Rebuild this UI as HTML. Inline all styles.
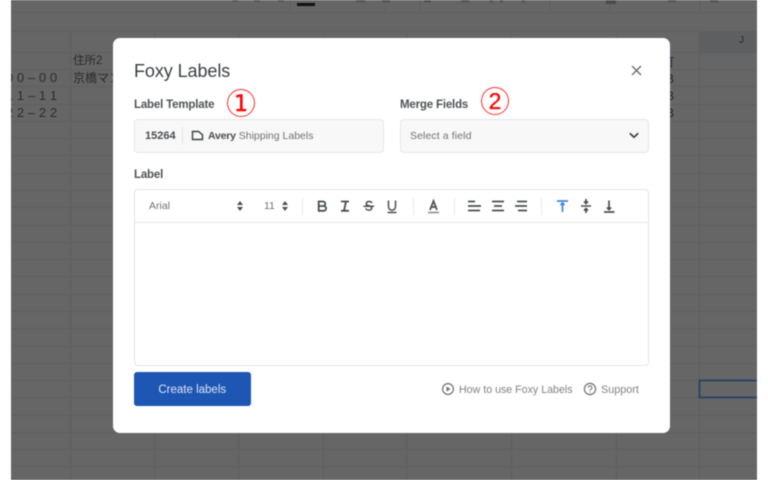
<!DOCTYPE html>
<html><head><meta charset="utf-8"><style>
html,body{margin:0;padding:0;background:#fff}
#p{position:relative;width:768px;height:480px;overflow:hidden;background:#fff;font-family:"Liberation Sans","Noto Sans CJK JP",sans-serif;filter:blur(.45px)}
#p div,#p svg{position:absolute}
.t{white-space:nowrap;line-height:16px;height:16px}
.lab{font-size:11.500px;font-weight:bold;color:#4f5255;letter-spacing:-.18px}
.box{background:#f8f8f8;border:1px solid #e6e6e6;border-radius:4px;box-sizing:border-box}
.cell{color:#2a2a2a}
.n{overflow:hidden;width:47px;left:11px;font-size:13px;color:#2c2c2c}
.n span{position:absolute;top:0;width:11px;text-align:center}
</style></head><body><div id="p">
<svg style="left:0;top:0" width="768" height="480" viewBox="0 0 768 480">
<rect x="11" width="746" height="480" fill="#666666"/>
<rect x="699.500" y="31" width="57.500" height="21" fill="#5e5f60"/>
<path fill="none" stroke="#5f5f5f" stroke-width="1" d="M11 12.500H757M11 31.500H757M11 52.500H757M11 69.500H757M11 86.500H757M11 104.500H757M11 121.500H757M11 138.500H757M11 155.500H757M11 173.500H757M11 190.500H757M11 207.500H757M11 225.500H757M11 242.500H757M11 259.500H757M11 276.500H757M11 294.500H757M11 311.500H757M11 328.500H757M11 346.500H757M11 363.500H757M11 380.500H757M11 397.500H757M11 415.500H757M11 432.500H757M11 449.500H757M11 466.500H757M70.500 31V480M154.500 31V480M238.500 31V480M323.500 31V480M406.500 31V480M511.500 31V480M616.500 31V480M699.500 31V480M290 0V12M385 0V12M420 0V12M550 0V12M610 0V12M700 0V12"/>
<path d="M757 380.500H699.500V397.500H757" fill="none" stroke="#1f3c66" stroke-width="1.500"/>
<rect x="297" y="3" width="18" height="3" fill="#111"/>
<path fill="#4a4a4a" d="M232 0h6v1.500h-6zM254 0h6v1.500h-6zM278 0h6v1.500h-6zM356 0h9v2h-9zM382 0h8v2h-8zM424 0h7v2h-7zM461 0h8v2h-8zM490 0h3v2h-3zM500 0h3v2h-3zM522 0h3v2h-3zM606 0h10v4h-10zM668 0h8v2h-8zM710 0h8v2h-8z"/>
</svg>
<div class="t cell" style="left:73px;top:53px;font-size:11.500px">住所2</div>
<div class="t cell" style="left:73px;top:70px;font-size:12px">京橋マンション</div>
<div class="t n" style="top:70px"><span style="left:-7px">0</span><span style="left:4px">0</span><span style="left:15px">–</span><span style="left:26px">0</span><span style="left:37px">0</span></div>
<div class="t n" style="top:88px"><span style="left:-7px">1</span><span style="left:4px">1</span><span style="left:15px">–</span><span style="left:26px">1</span><span style="left:37px">1</span></div>
<div class="t n" style="top:105px"><span style="left:-7px">2</span><span style="left:4px">2</span><span style="left:15px">–</span><span style="left:26px">2</span><span style="left:37px">2</span></div>
<div class="t" style="left:662px;top:54px;font-size:12px;color:#1a2433">町</div>
<div class="t" style="left:666px;top:71px;font-size:12px;color:#1a2433">B</div>
<div class="t" style="left:666px;top:88px;font-size:12px;color:#1a2433">B</div>
<div class="t" style="left:666px;top:105px;font-size:12px;color:#1a2433">B</div>
<div class="t" style="left:739px;top:33px;font-size:10px;color:#2a2a2a">J</div>

<div style="left:113px;top:38px;width:556.500px;height:395px;background:#fff;border-radius:7px"></div>
<div class="t" style="left:134px;top:61px;height:20px;line-height:20px;font-size:18px;color:#3c4043;letter-spacing:-.08px">Foxy Labels</div>
<svg style="left:630px;top:64px" width="13" height="13" viewBox="0 0 13 13"><path d="M2 2l9 9M11 2l-9 9" stroke="#6f6f6f" stroke-width="1.400" fill="none"/></svg>

<div class="t lab" style="left:134px;top:97px">Label Template</div>
<div class="t lab" style="left:400px;top:97px">Merge Fields</div>
<svg style="left:226px;top:88px" width="30" height="30" viewBox="0 0 30 30"><circle cx="15" cy="15" r="13.500" fill="#fff" stroke="#ff3030" stroke-width="1"/><text x="15" y="23" text-anchor="middle" font-family="DejaVu Sans,sans-serif" font-size="22" stroke="#ff0000" stroke-width=".5" fill="#ff0000">1</text></svg>
<svg style="left:480px;top:86px" width="30" height="30" viewBox="0 0 30 30"><circle cx="15" cy="15" r="13.500" fill="#fff" stroke="#ff3030" stroke-width="1"/><text x="15" y="23" text-anchor="middle" font-family="Liberation Sans,sans-serif" font-size="23" stroke="#ff0000" stroke-width=".3" fill="#ff0000">2</text></svg>

<div class="box" style="left:134px;top:119px;width:250px;height:34px"></div>
<div class="t" style="left:145px;top:127.500px;font-size:11px;font-weight:bold;color:#4a4d50">15264</div>
<div style="left:182px;top:127px;width:1px;height:17px;background:#e6e6e6"></div>
<svg style="left:191px;top:130px" width="13" height="11" viewBox="0 0 13 11"><path d="M1.500 1.500H7.500L11.500 4.800V9.500H1.500Z" fill="none" stroke="#3c4043" stroke-width="1.400"/></svg>
<div class="t" style="left:208px;top:128px;font-size:10.500px;color:#6f7174"><b style="color:#4a4d50;letter-spacing:-.2px">Avery</b> Shipping Labels</div>

<div class="box" style="left:400px;top:119px;width:249px;height:34px"></div>
<div class="t" style="left:410px;top:128px;font-size:10.500px;color:#6f7174;letter-spacing:.1px">Select a field</div>
<svg style="left:628px;top:131px" width="12" height="9" viewBox="0 0 12 9"><path d="M1.800 2.200L6 6.200L10.200 2.200" fill="none" stroke="#3c4043" stroke-width="1.700"/></svg>

<div class="t lab" style="left:134px;top:167px">Label</div>
<div style="left:134px;top:189px;width:515px;height:177px;box-sizing:border-box;border:1px solid #e3e3e3;border-radius:4px;background:#fff"></div>
<div style="left:135px;top:222px;width:513px;height:1px;background:#e6e6e6"></div>
<div class="t" style="left:149px;top:198px;font-size:10.500px;color:#6f7174">Arial</div>
<div class="t" style="left:264px;top:198px;font-size:10.500px;color:#6f7174">11</div>
<svg style="left:135px;top:190px" width="513" height="32" viewBox="135 190 513 32">
<path fill="#4a4d50" d="M240 201l3 4h-6zM240 211l3-4h-6zM285 201l3 4h-6zM285 211l3-4h-6z"/>
<path stroke="#e8e8e8" stroke-width="1" d="M302.500 198v17M413.500 198v17M454.500 198v17M541.500 198v17"/>
<g fill="none" stroke="#4a4d50" stroke-width="1.800">
<path d="M318.700 201.500h4.300a2.200 2.200 0 0 1 0 4.500h-4.300zM318.700 206h5a2.400 2.400 0 0 1 0 4.800h-5z"/>
<path d="M341 201.500h8M341 210.800h8M346 201.500l-2 9.300"/>
<path d="M372 203a3 2 0 0 0-3-1.500c-3 0-3.800 3 -1 4l2 .6c2.800 1 2 4 -1 4a3 2 0 0 1-3.200-1.800M363.500 206.200h10.500" stroke-width="1.500"/>
<path d="M388.500 200.500v6.200a3.500 3.500 0 0 0 7 0v-6.200M387.500 212.500h9" stroke-width="1.500"/>
<path d="M430 210l3.500-9 3.500 9M431.200 207h4.600" stroke-width="1.700"/>
<path d="M468 201.500h7M468 206h13M468 210.500h12M492 201.500h12M494 206h8M492 210.500h12M517 201.500h10M515 206h12M518 210.500h9" stroke-width="1.800"/>
<path d="M581 206h10M586 199v4M584 201.500l2 2 2-2M586 213v-4M584 210.500l2-2 2 2" stroke-width="1.600"/>
<path d="M604 212h10.500M609 200.500v9M607 207.500l2 2 2-2" stroke-width="1.700"/>
</g>
<path d="M428 212.500h11" stroke="#8a8a8a" stroke-width="1.500"/>
<path d="M557 201h11M562.500 212v-9M560.500 205l2-2 2 2" fill="none" stroke="#4285e0" stroke-width="1.700"/>
</svg>

<div style="left:134px;top:372px;width:116.500px;height:34px;background:#1e56b3;border-radius:3px"></div>
<div class="t" style="left:134px;top:382px;width:116.500px;text-align:center;font-size:11.500px;color:#dce6f7">Create labels</div>
<svg style="left:441px;top:382px" width="14" height="14" viewBox="0 0 14 14"><circle cx="7" cy="7" r="5.400" fill="none" stroke="#6d6f72" stroke-width="1.200"/><path d="M5.500 4.500L9.500 7L5.500 9.500Z" fill="#6d6f72"/></svg>
<div class="t" style="left:459px;top:382px;font-size:10.650px;color:#808285">How to use Foxy Labels</div>
<svg style="left:583px;top:382px" width="14" height="14" viewBox="0 0 14 14"><circle cx="7" cy="7" r="5.600" fill="none" stroke="#6d6f72" stroke-width="1.200"/><path d="M5.300 5.700a1.800 1.800 0 1 1 2.600 1.600c-.6.300-.9.600-.9 1.300M7 9.500v1" fill="none" stroke="#6d6f72" stroke-width="1"/></svg>
<div class="t" style="left:601px;top:382px;font-size:10.800px;color:#808285">Support</div>
</div></body></html>
